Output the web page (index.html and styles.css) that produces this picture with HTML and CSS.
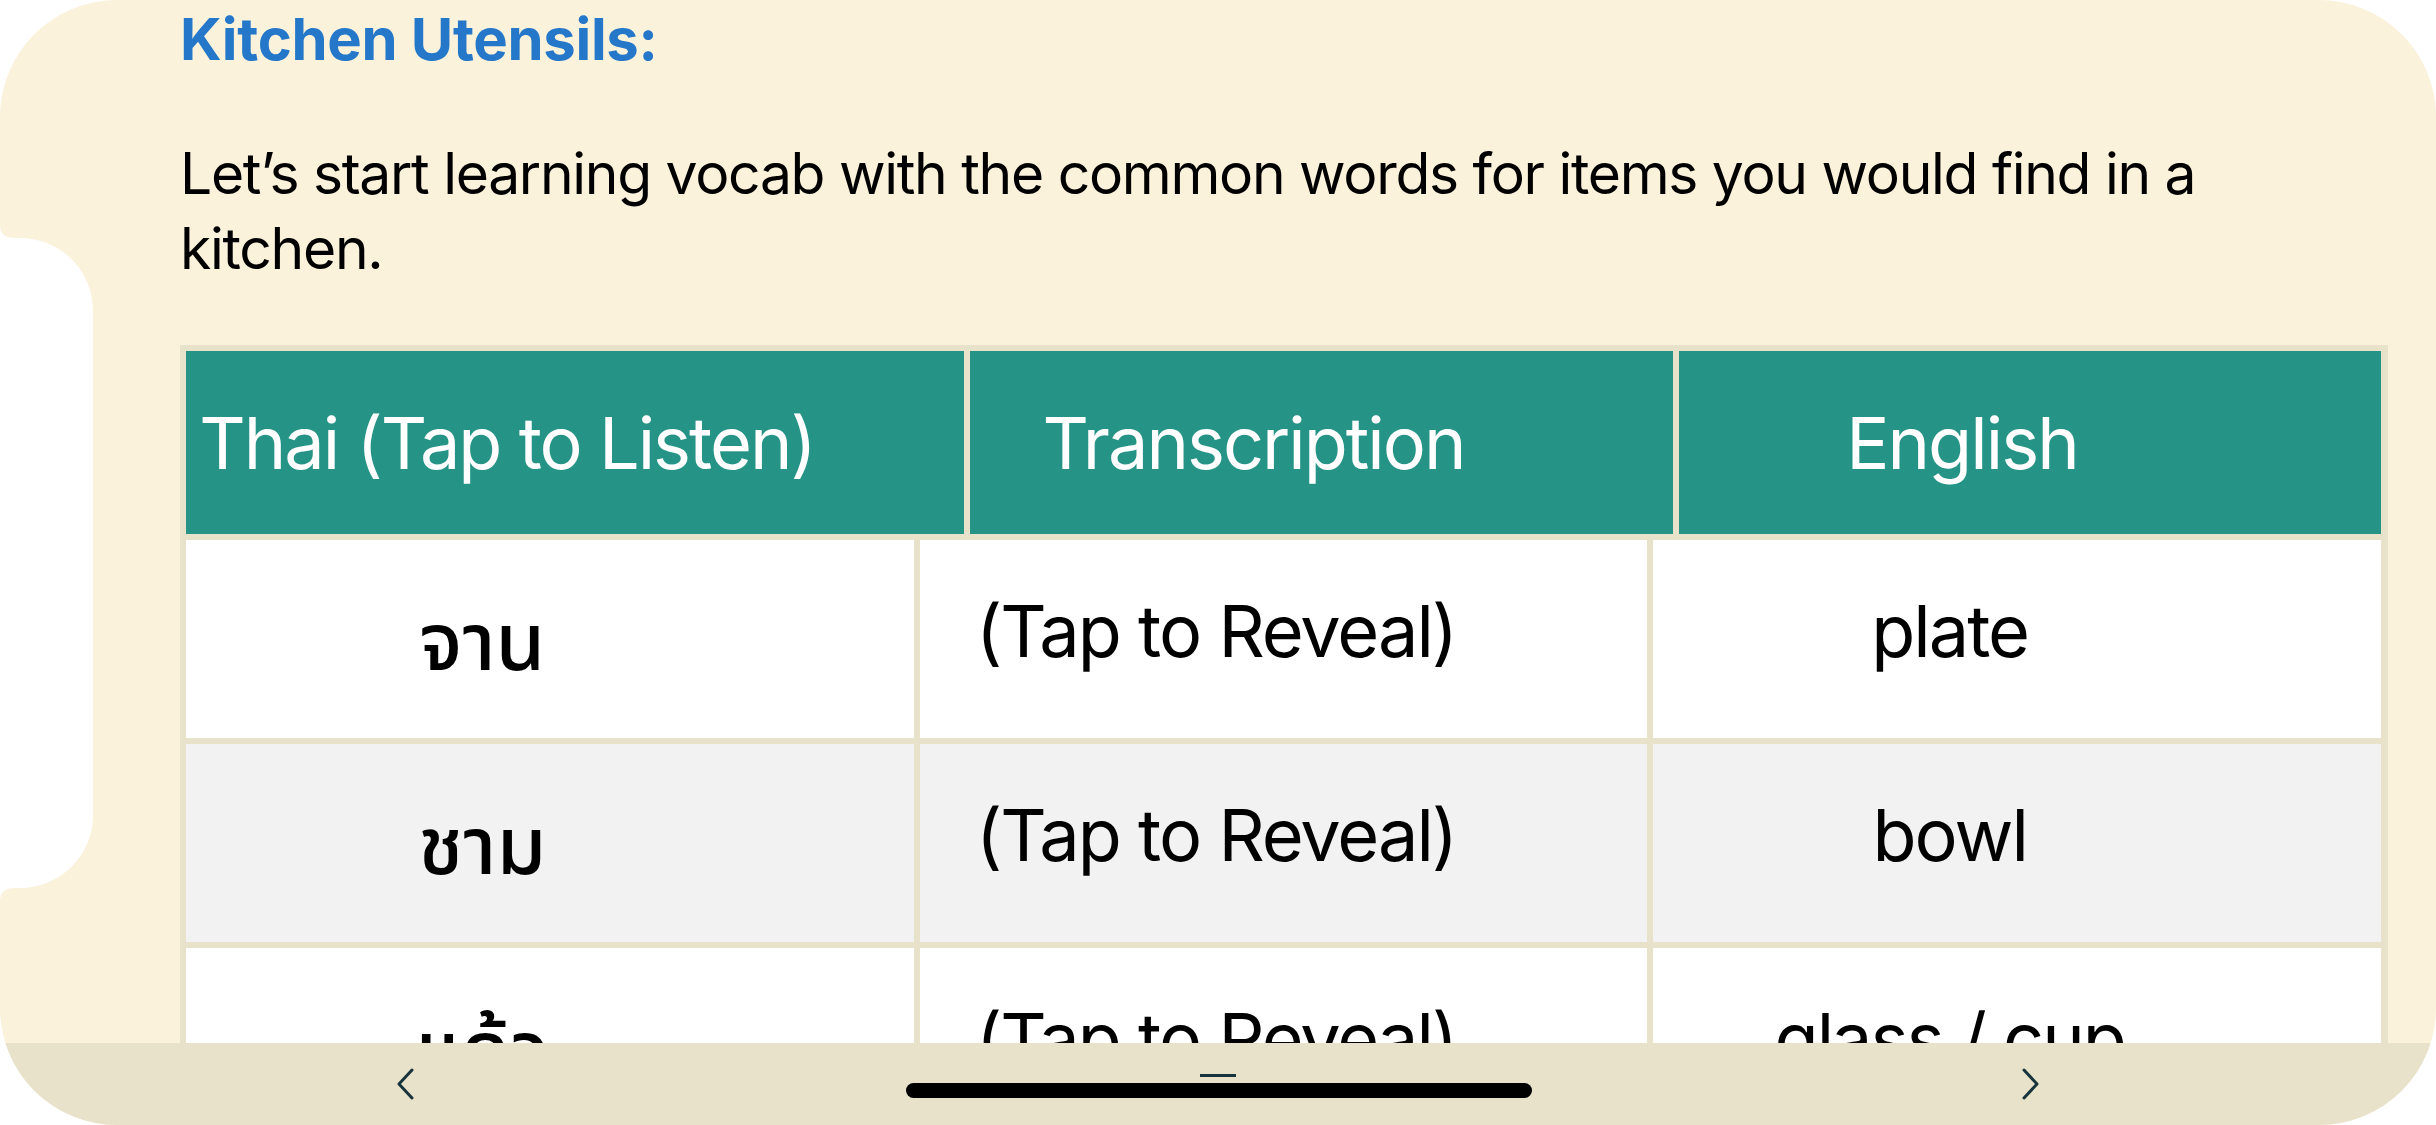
FILE: index.html
```html
<!DOCTYPE html>
<html lang="en">
<head>
<meta charset="utf-8">
<title>Kitchen Utensils</title>
<link rel="stylesheet" href="styles.css">
</head>
<body>
<div class="screen">
  <main class="content">
    <h2 class="title">Kitchen Utensils:</h2>
    <p class="intro">Let’s start learning vocab with the common words for items you would find in a kitchen.</p>
    <div class="vocab">
      <div class="vocab-head">
        <div class="hcell hcell-thai">Thai (Tap to Listen)</div>
        <div class="hcell hcell-trans">Transcription</div>
        <div class="hcell hcell-eng">English</div>
      </div>
      <div class="vocab-row">
        <div class="cell cell-thai" lang="th">จาน</div>
        <div class="cell">(Tap to Reveal)</div>
        <div class="cell">plate</div>
      </div>
      <div class="vocab-row vocab-row-alt">
        <div class="cell cell-thai" lang="th">ชาม</div>
        <div class="cell">(Tap to Reveal)</div>
        <div class="cell">bowl</div>
      </div>
      <div class="vocab-row">
        <div class="cell cell-thai" lang="th">แก้ว</div>
        <div class="cell">(Tap to Reveal)</div>
        <div class="cell">glass / cup</div>
      </div>
    </div>
  </main>

  <svg class="notch" width="100" height="690" viewBox="0 0 100 690" aria-hidden="true">
    <path d="M0 0 Q0 13 15 13 L20 13 C60 13 93 45 93 86 L93 590 C93 631 60 663 20 663 L15 663 Q0 663 0 676 Z" fill="#ffffff"/>
  </svg>

  <nav class="toolbar">
    <div class="toolbar-slot">
      <svg class="chevron" width="20" height="32" viewBox="0 0 20 32" aria-hidden="true">
        <polyline points="16,2 3,16 16,30" fill="none" stroke="#17343d" stroke-width="3" stroke-linecap="round" stroke-linejoin="round"/>
      </svg>
    </div>
    <div class="toolbar-slot">
      <svg class="menu-icon" width="36" height="22" viewBox="0 0 36 22" aria-hidden="true">
        <rect x="0" y="0" width="36" height="3" fill="#17343d"/>
        <rect x="0" y="9" width="36" height="3" fill="#17343d"/>
        <rect x="0" y="18" width="36" height="3" fill="#17343d"/>
      </svg>
    </div>
    <div class="toolbar-slot">
      <svg class="chevron" width="20" height="32" viewBox="0 0 20 32" aria-hidden="true">
        <polyline points="4,2 17,16 4,30" fill="none" stroke="#17343d" stroke-width="3" stroke-linecap="round" stroke-linejoin="round"/>
      </svg>
    </div>
  </nav>
  <div class="home-indicator"></div>
</div>
</body>
</html>
```
FILE: styles.css
```css
* {
  box-sizing: border-box;
}

html, body {
  margin: 0;
  padding: 0;
  background: #ffffff;
}

body {
  font-family: Inter, "Noto Sans", "Liberation Sans", sans-serif;
  color: #000000;
}

.screen {
  position: relative;
  width: 2436px;
  height: 1125px;
  background: #fbf2dc;
  border-radius: 117px;
  overflow: hidden;
}

.content {
  padding: 4px 48px 0 180px;
}

.title {
  margin: 0;
  font-size: 58px;
  line-height: 70px;
  font-weight: 700;
  color: #2477c9;
  letter-spacing: -0.3px;
}

.intro {
  margin: 62px 0 0;
  font-size: 57px;
  line-height: 75px;
  font-weight: 400;
  letter-spacing: -1.3px;
}

.vocab {
  margin-top: 59px;
  display: flex;
  flex-direction: column;
  gap: 6px;
  background: #e8e2cb;
  padding: 6px 7px 6px 6px;
}

.vocab-head {
  display: flex;
  gap: 6px;
  height: 183px;
}

.hcell {
  display: flex;
  align-items: center;
  justify-content: center;
  padding-right: 136px;
  background: #259486;
  color: #ffffff;
  font-size: 72px;
  font-weight: 400;
  letter-spacing: -2px;
  white-space: nowrap;
}

.hcell-thai {
  width: 778px;
}

.hcell-trans {
  width: 703px;
}

.hcell-eng {
  width: 702px;
}

.vocab-row {
  display: grid;
  grid-template-columns: repeat(3, 1fr);
  gap: 6px;
  height: 198px;
}

.cell {
  background: #ffffff;
  text-align: center;
  padding: 47px 135px 0 0;
  font-size: 72px;
  line-height: 87px;
  letter-spacing: -2px;
  white-space: nowrap;
}

.vocab-row-alt .cell {
  background: #f2f2f2;
}

.cell-thai {
  font-family: "Noto Sans Thai", Thonburi, Loma, Garuda, "Tlwg Typo", Inter, sans-serif;
  font-weight: 500;
  font-size: 80px;
  letter-spacing: 0;
  padding-top: 62px;
}

.notch {
  position: absolute;
  left: 0;
  top: 225px;
  display: block;
}

.toolbar {
  position: absolute;
  left: 0;
  right: 0;
  bottom: 0;
  height: 82px;
  background: #e8e2cb;
  display: grid;
  grid-template-columns: repeat(3, 1fr);
  align-items: center;
}

.toolbar-slot {
  display: flex;
  justify-content: center;
  align-items: center;
}

.chevron {
  display: block;
}

.menu-icon {
  display: block;
  margin-top: 1px;
}

.home-indicator {
  position: absolute;
  left: 906px;
  top: 1083px;
  width: 626px;
  height: 15px;
  border-radius: 8px;
  background: #000000;
}
```
